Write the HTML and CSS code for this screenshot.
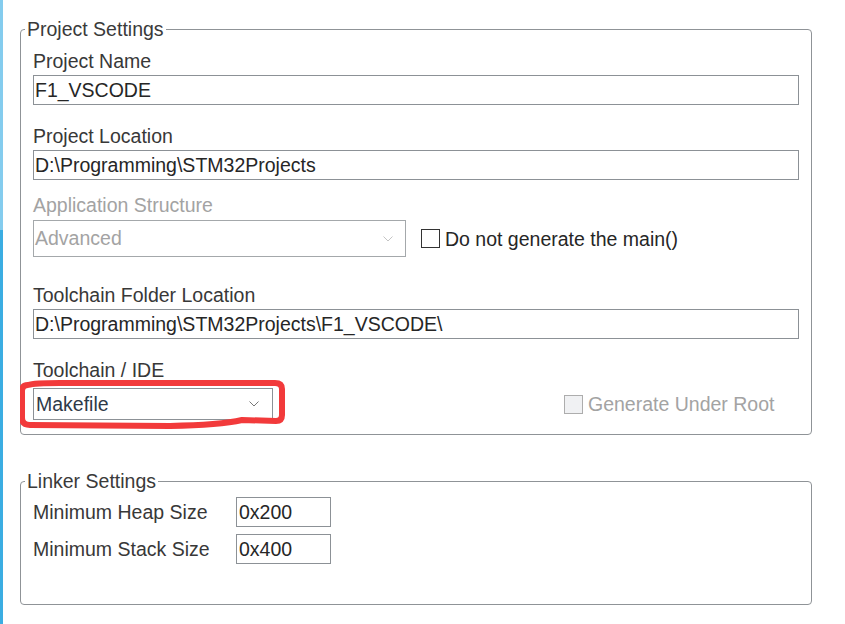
FILE: index.html
```html
<!DOCTYPE html>
<html>
<head>
<meta charset="utf-8">
<link rel="stylesheet" href="styles.css">
</head>
<body>
<div class="page">
  <div class="strip"></div>
  <div class="content">
    <fieldset class="group project">
      <legend>Project Settings</legend>
      <div class="label first">Project Name</div>
      <div class="field">F1_VSCODE</div>
      <div class="label">Project Location</div>
      <div class="field">D:\Programming\STM32Projects</div>
      <div class="label disabled app-label">Application Structure</div>
      <div class="row app-row">
        <div class="select disabled-select">
          <span>Advanced</span>
          <svg class="chev" width="10" height="6" viewBox="0 0 10 6"><polyline points="0.5,0.5 5,5 9.5,0.5" fill="none" stroke="#c4c4c4" stroke-width="1"/></svg>
        </div>
        <div class="check">
          <span class="box"></span>
          <span class="check-text">Do not generate the main()</span>
        </div>
      </div>
      <div class="label tool-label">Toolchain Folder Location</div>
      <div class="field">D:\Programming\STM32Projects\F1_VSCODE\</div>
      <div class="label ide-label">Toolchain / IDE</div>
      <div class="row ide-row">
        <div class="select ide-select">
          <span>Makefile</span>
          <svg class="chev" width="10" height="6" viewBox="0 0 10 6"><polyline points="0.5,0.5 5,5 9.5,0.5" fill="none" stroke="#777" stroke-width="1"/></svg>
          <svg class="mark" width="270" height="52" viewBox="0 0 270 52"><path d="M8 5 Q2 5 2 11 L2 38 Q2 45 10 45 L150 46 Q200 45 222 40 L256 41 Q262 41 262 35 L262 9 Q262 3 255 3 L40 3 Q14 3 8 5 Z" fill="none" stroke="#f23a3b" stroke-width="6" stroke-linejoin="round" stroke-linecap="round"/></svg>
        </div>
        <div class="check gen">
          <span class="box box-disabled"></span>
          <span class="check-text disabled">Generate Under Root</span>
        </div>
      </div>
    </fieldset>

    <fieldset class="group linker">
      <legend>Linker Settings</legend>
      <div class="linker-grid">
        <div class="label inline">Minimum Heap Size</div>
        <div class="field small">0x200</div>
        <div class="label inline">Minimum Stack Size</div>
        <div class="field small">0x400</div>
      </div>
    </fieldset>
  </div>
</div>
</body>
</html>
```

FILE: styles.css
```css
html, body {
  margin: 0;
  padding: 0;
  background: #ffffff;
}

body {
  font-family: "Liberation Sans", Arial, sans-serif;
  font-size: 19.5px;
  color: #363636;
}

.page {
  display: flex;
  width: 845px;
  height: 624px;
  overflow: hidden;
}

.strip {
  width: 3px;
  flex: 0 0 3px;
  background: linear-gradient(to bottom, #84ccee 0, #84ccee 230px, #3bade2 230px, #3bade2 100%);
}

.content {
  padding-left: 17px;
  padding-top: 18px;
}

.group {
  margin: 0;
  box-sizing: border-box;
  width: 792px;
  border: 1px solid #8f9397;
  border-radius: 4px;
  padding: 0 12px 12px 12px;
  min-inline-size: 0;
}

.project {
  padding-bottom: 14px;
}

.group legend {
  padding: 0 2px;
  margin-left: -8px;
  line-height: 22px;
  height: 22px;
  color: #3a3a3a;
}

.label {
  line-height: 22px;
  height: 22px;
  margin-top: 20px;
  color: #383838;
  white-space: nowrap;
}

.label.first {
  margin-top: 10px;
}

.label.disabled, .check-text.disabled {
  color: #a3a3a3;
}

.app-label {
  margin-top: 14px;
}

.tool-label {
  margin-top: 27px;
}

.ide-label {
  margin-top: 20px;
}

.field {
  box-sizing: border-box;
  height: 30px;
  margin-top: 3px;
  border: 1px solid #8c9196;
  padding-left: 1px;
  line-height: 28px;
  color: #262626;
  white-space: nowrap;
}

.row {
  display: flex;
  align-items: center;
}

.app-row {
  margin-top: 4px;
}

.select {
  position: relative;
  box-sizing: border-box;
  border: 1px solid #8c9196;
  padding-left: 1px;
  display: flex;
  align-items: center;
  white-space: nowrap;
}

.disabled-select {
  width: 373px;
  height: 37px;
  border-color: #a4a8ab;
  color: #a3a3a3;
}

.disabled-select .chev {
  margin-left: auto;
  margin-right: 12px;
}

.ide-row {
  margin-top: 7px;
}

.ide-select {
  width: 240px;
  height: 32px;
  color: #2e3a48;
  padding-left: 2px;
}

.ide-select .chev {
  margin-left: auto;
  margin-right: 13px;
}

.mark {
  position: absolute;
  left: -14px;
  top: -9px;
  pointer-events: none;
}

.check {
  display: flex;
  align-items: center;
  margin-left: 15px;
}

.box {
  box-sizing: border-box;
  width: 19px;
  height: 19px;
  border: 1px solid #333333;
  background: #ffffff;
  margin-right: 5px;
}

.box-disabled {
  border-color: #adadad;
  background: #f0f1f3;
}

.check-text {
  line-height: 22px;
  color: #262626;
  white-space: nowrap;
}

.gen {
  margin-left: 291px;
}

.linker {
  margin-top: 35px;
  padding-bottom: 40px;
}

.linker-grid {
  display: grid;
  grid-template-columns: 203px 95px;
  row-gap: 7px;
  margin-top: 5px;
  align-items: center;
}

.label.inline {
  margin-top: 0;
}

.field.small {
  margin-top: 0;
  padding-left: 2px;
}
```
